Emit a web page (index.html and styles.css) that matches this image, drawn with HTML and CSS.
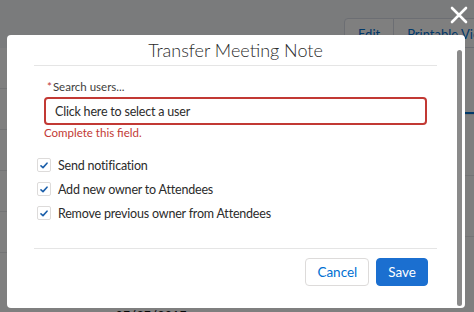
FILE: index.html
```html
<!DOCTYPE html>
<html lang="en">
<head>
    <meta charset="UTF-8">
    <meta name="viewport" content="width=device-width, initial-scale=1.0">
    <link rel="stylesheet" href="styles.css">
    <title>Transfer Meeting Note</title>
</head>
<body>
    <div class="page">
        <div class="page-header">
            <div class="btn-group">
                <button class="group-btn">Edit</button>
                <button class="group-btn">Printable View</button>
            </div>
        </div>
        <div class="page-body">
            <div class="main-col">
                <div class="main-row"></div>
                <div class="main-row"></div>
                <div class="main-row"></div>
                <div class="main-row"></div>
                <div class="main-row"></div>
                <div class="main-date">07/27/2017</div>
            </div>
            <div class="side-col">
                <div class="side-tab">Activity</div>
                <div class="side-row">Filter</div>
                <div class="side-row">Step</div>
                <div class="side-row side-bold">Add</div>
            </div>
        </div>
    </div>

    <div class="backdrop"></div>

    <button class="close-btn" aria-label="Close">
        <svg width="20" height="20" viewBox="0 0 20 20">
            <path d="M3 3 L17 17 M17 3 L3 17" stroke="#fff" stroke-width="2.6" stroke-linecap="round"/>
        </svg>
    </button>

    <section class="modal">
        <div class="modal-content">
            <header class="modal-header">
                <h2 class="modal-title">Transfer Meeting Note</h2>
            </header>
            <div class="modal-body">
                <div class="field">
                    <label class="field-label"><abbr class="required">*</abbr>Search users...</label>
                    <input type="text" class="field-input" placeholder="Click here to select a user">
                    <div class="field-error">Complete this field.</div>
                </div>
                <ul class="checks">
                    <li class="check-row"><span class="check-box"><svg width="8" height="7" viewBox="0 0 8 7"><path d="M1 3.8 L3 5.6 L7 1.2" fill="none" stroke="#1b5faa" stroke-width="1.6" stroke-linecap="round" stroke-linejoin="round"/></svg></span>Send notification</li>
                    <li class="check-row"><span class="check-box"><svg width="8" height="7" viewBox="0 0 8 7"><path d="M1 3.8 L3 5.6 L7 1.2" fill="none" stroke="#1b5faa" stroke-width="1.6" stroke-linecap="round" stroke-linejoin="round"/></svg></span>Add new owner to Attendees</li>
                    <li class="check-row"><span class="check-box"><svg width="8" height="7" viewBox="0 0 8 7"><path d="M1 3.8 L3 5.6 L7 1.2" fill="none" stroke="#1b5faa" stroke-width="1.6" stroke-linecap="round" stroke-linejoin="round"/></svg></span>Remove previous owner from Attendees</li>
                </ul>
            </div>
            <footer class="modal-footer">
                <button class="btn btn-neutral">Cancel</button>
                <button class="btn btn-brand">Save</button>
            </footer>
        </div>
        <div class="scrollbar"></div>
    </section>
</body>
</html>
```

FILE: styles.css
```css
body {
    font-family: Lato, "Open Sans", sans-serif;
    margin: 0;
    padding: 0;
    width: 474px;
    height: 312px;
    overflow: hidden;
    color: #3e3e3c;
}

/* page behind the modal */
.page {
    height: 312px;
    background-color: #f4f6f9;
}

.page-header {
    height: 48px;
    display: flex;
    justify-content: flex-end;
    align-items: flex-end;
}

.btn-group {
    display: flex;
    margin-right: -30px;
}

.group-btn {
    font-family: inherit;
    font-size: 13px;
    color: #0070d2;
    background-color: #fff;
    border: 1px solid #d8dde6;
    height: 30px;
    padding: 2px 13px 0;
    margin-left: -1px;
}

.group-btn:first-child {
    border-radius: 4px 0 0 4px;
}

.page-body {
    display: grid;
    grid-template-columns: 1fr 56px;
    background-color: #fff;
    height: 264px;
}

.main-col {
    display: flex;
    flex-direction: column;
}

.main-row {
    height: 40px;
    border-bottom: 1px solid #e6e8eb;
}

.main-date {
    margin-top: 55px;
    padding-left: 116px;
    font-size: 11px;
    font-weight: 700;
    letter-spacing: 1px;
    color: #111;
}

.side-col {
    display: flex;
    flex-direction: column;
    padding-left: 10px;
    font-size: 13px;
    overflow: hidden;
    white-space: nowrap;
}

.side-tab {
    margin-left: -30px;
    padding-top: 44px;
    height: 20px;
    font-weight: 700;
    font-size: 14px;
    color: #16325c;
    border-bottom: 2px solid #0070d2;
}

.side-row {
    margin-left: -22px;
    height: 60px;
    line-height: 40px;
    border-top: 1px solid #e6e8eb;
    color: #54698d;
}

.side-bold {
    font-weight: 700;
    color: #111;
}

/* overlay */
.backdrop {
    position: absolute;
    inset: 0;
    background-color: rgba(0, 0, 0, 0.5);
}

.close-btn {
    position: absolute;
    top: 5px;
    left: 449px;
    width: 20px;
    height: 20px;
    padding: 0;
    border: 0;
    background: transparent;
    cursor: pointer;
}

.modal {
    position: absolute;
    top: 35px;
    left: 7px;
    width: 458px;
    height: 273px;
    background-color: #fff;
    border-radius: 4px;
    display: flex;
}

.modal-content {
    flex: 1;
    display: flex;
    flex-direction: column;
    padding: 0 20px 0 27px;
}

.scrollbar {
    width: 5px;
    margin: 15px 3px 2px 0;
    background-color: #8a8a8a;
    border-radius: 3px;
}

.modal-header {
    border-bottom: 1px solid #e5e5e5;
}

.modal-title {
    margin: 0;
    height: 30px;
    line-height: 30px;
    text-align: center;
    font-size: 18px;
    font-weight: 300;
    color: #2b2b2b;
}

.modal-body {
    padding-top: 13px;
}

.field {
    margin: 0 10px;
}

.field-label {
    display: block;
    padding-left: 3px;
    font-size: 11.5px;
    line-height: 16px;
    margin-bottom: 2px;
    color: #3e3e3c;
}

.required {
    color: #c23934;
    text-decoration: none;
    margin-right: 1px;
}

.field-input {
    display: block;
    box-sizing: border-box;
    width: 100%;
    height: 28px;
    border: 2px solid #c23934;
    border-radius: 4px;
    padding: 0 9px;
    font-family: inherit;
    font-size: 12.5px;
    letter-spacing: -0.2px;
    outline: none;
}

.field-input::placeholder {
    color: #2b2b2b;
}

.field-error {
    font-size: 11.5px;
    line-height: 16px;
    color: #c23934;
}

.checks {
    list-style: none;
    margin: 12px 0 0 3px;
    padding: 0;
}

.check-row {
    display: flex;
    align-items: center;
    gap: 7px;
    height: 24px;
    font-size: 12.5px;
    letter-spacing: -0.2px;
    color: #2b2b2b;
}

.check-box {
    box-sizing: border-box;
    width: 14px;
    height: 14px;
    border: 1px solid #dddbda;
    border-radius: 2px;
    display: flex;
    align-items: center;
    justify-content: center;
}

.modal-footer {
    margin-top: auto;
    margin-bottom: 22px;
    border-top: 1px solid #e5e5e5;
    padding: 9px 9px 0 0;
    display: flex;
    justify-content: flex-end;
    gap: 7px;
}

.btn {
    font-family: inherit;
    font-size: 13.5px;
    height: 28px;
    border-radius: 4px;
    padding: 0 11px;
    cursor: pointer;
}

.btn-neutral {
    color: #0070d2;
    background-color: #fff;
    border: 1px solid #dddbda;
}

.btn-brand {
    color: #fff;
    background-color: #1b6fd0;
    border: 1px solid #1b6fd0;
}
```
